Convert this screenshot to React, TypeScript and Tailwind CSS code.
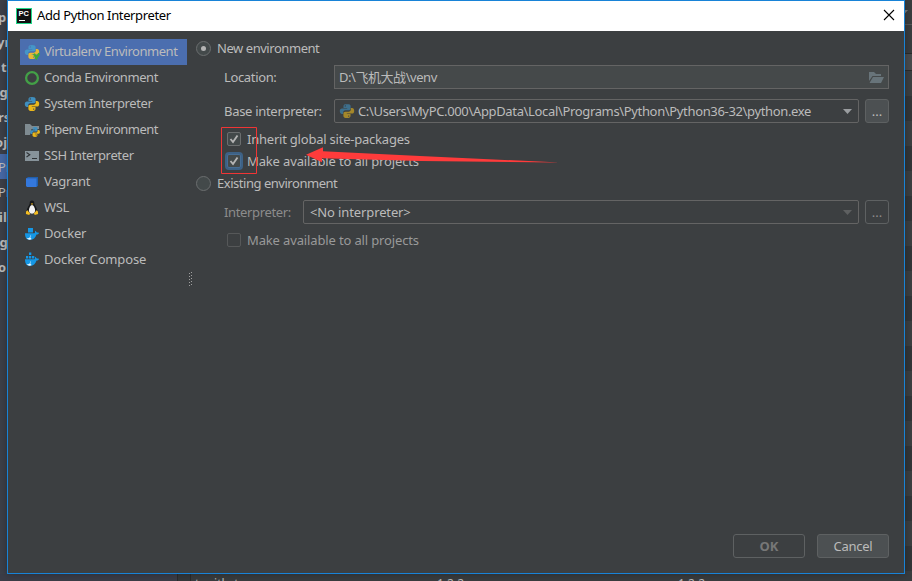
import type { ReactNode } from 'react';

const snake =
  'M8 .9C5.500.9 4.500 1.700 4.500 3v1.900h3.700v.5H3C1.600 5.400.8 6.500.8 8.100S1.600 11 3 11h1.200V9.400c0-1.300 1-2.200 2.200-2.200h3.400c1 0 1.800-.8 1.800-1.800V3c0-1.300-1-2.100-3.600-2.100zM6.300 2.200a.7.7 0 1 1 0 1.400.7.7 0 0 1 0-1.400z';

function PythonIcon({ className = '' }: { className?: string }) {
  return (
    <svg width="16" height="16" viewBox="0 0 16 16" className={`shrink-0 ${className}`}>
      <path fill="#3f8fbf" d={snake} />
      <path fill="#eab71b" d={snake} transform="rotate(180 8 8)" />
    </svg>
  );
}

function VirtualenvIcon() {
  return (
    <svg width="16" height="16" viewBox="0 0 16 16" className="shrink-0">
      <path fill="#4596c8" d={snake} />
      <path fill="#e6b935" d={snake} transform="rotate(180 8 8)" />
      <path d="M10 9.800l2.400 4.400 2.800-4.800" fill="none" stroke="#3dac35" strokeWidth="2.200" />
    </svg>
  );
}

function CondaIcon() {
  return (
    <svg width="16" height="16" viewBox="0 0 16 16" className="shrink-0">
      <circle cx="8" cy="8" r="5.900" fill="none" stroke="#43a047" strokeWidth="2.300" />
    </svg>
  );
}

function PipenvIcon() {
  return (
    <svg width="16" height="16" viewBox="0 0 16 16" className="shrink-0">
      <path fill="#7f8b91" d="M1 2h5l2 2h7v3H7.500L6 13H1z" />
      <svg x="5.500" y="4.500" width="11" height="11" viewBox="0 0 16 16">
        <PythonIcon />
      </svg>
    </svg>
  );
}

function SshIcon() {
  return (
    <svg width="16" height="16" viewBox="0 0 16 16" className="shrink-0">
      <path fill="#87939a" d="M1 3h14v10H1z" />
      <path d="M2.500 4.500L5.800 6.700 2.500 9M8 10.500h5" fill="none" stroke="#2f3336" strokeWidth="1.100" />
    </svg>
  );
}

function VagrantIcon() {
  return (
    <svg width="16" height="16" viewBox="0 0 16 16" className="shrink-0">
      <path fill="#1f5fae" d="M4 3h10v9l-2 1V4.500H2z" />
      <path fill="#3478dc" d="M2 4.300h10.500V13H3l-1-1z" />
    </svg>
  );
}

function LinuxIcon() {
  return (
    <svg width="16" height="16" viewBox="0 0 16 16" className="shrink-0">
      <path fill="#16181a" d="M8 .6c1.700 0 2.300 1.100 2.300 2.700 0 2 2.900 4 3 8.200L11 14H5l-2.300-2.500c.1-4 3-6.200 3-8.200C5.700 1.700 6.300.6 8 .6z" />
      <path fill="#f2f2f2" d="M8 4.900c1.500 0 3.100 3 3.100 5.500 0 2-1.200 3.300-3.100 3.300s-3.100-1.300-3.100-3.300C4.900 8 6.500 4.900 8 4.900z" />
      <path fill="#f5bd20" d="M6.700 3.600h2.600L8 5zM3.400 10.200l2.700 3.400-.9 1.300-3.300-.9.200-2.400zM12.600 10.200l-2.700 3.400.9 1.300 3.300-.9-.2-2.400z" />
    </svg>
  );
}

function DockerIcon({ compose = false }: { compose?: boolean }) {
  return (
    <svg width="16" height="16" viewBox="0 0 16 16" className="shrink-0">
      {compose ? (
        <path fill="#1597e5" d="M5 .5h2.300V3H5zM2 4h2.300v2.500H2zM5 4h2.300v2.500H5zM8 4h2.300v2.500H8z" />
      ) : (
        <path fill="#1597e5" d="M4 2h5v4.500H4z" />
      )}
      <path fill="#1597e5" d="M1 7.200h9.500c.7-.4.600-1.700.4-2.400.9.200 1.600 1 1.800 1.800.9-.2 1.800 0 2.300.3-.4 1.100-1.400 1.600-2.500 1.700-1 3.500-3.200 5.400-6.400 5.400C2.600 14 1 11.500 1 7.200z" />
      <path fill="#e8f5fd" d="M2.500 12.300c1.700.2 2.700-.3 3.700-1.400.3 1 .8 1.600 1.500 2.100-1.500 1-3.500 1-5.200-.7z" />
      <circle cx="6.500" cy="10" r=".6" fill="#e8f5fd" />
    </svg>
  );
}

const environments: { label: string; icon: ReactNode; className: string }[] = [
  { label: 'Virtualenv Environment', icon: <VirtualenvIcon />, className: 'bg-[#4b6eaf] tracking-[-0.47px]' },
  { label: 'Conda Environment', icon: <CondaIcon />, className: 'tracking-[-0.43px]' },
  { label: 'System Interpreter', icon: <PythonIcon />, className: 'tracking-[-0.37px]' },
  { label: 'Pipenv Environment', icon: <PipenvIcon />, className: 'tracking-[-0.5px]' },
  { label: 'SSH Interpreter', icon: <SshIcon />, className: 'tracking-[-0.35px]' },
  { label: 'Vagrant', icon: <VagrantIcon />, className: 'tracking-[-0.25px]' },
  { label: 'WSL', icon: <LinuxIcon />, className: 'tracking-[-0.35px]' },
  { label: 'Docker', icon: <DockerIcon />, className: 'tracking-[-0.15px]' },
  { label: 'Docker Compose', icon: <DockerIcon compose />, className: 'tracking-[-0.15px]' },
];

function Radio({ checked = false }: { checked?: boolean }) {
  return (
    <span className="flex size-[15px] shrink-0 items-center justify-center rounded-full border border-[#6b6e6f] bg-[#43494a]">
      {checked && <span className="size-[5px] rounded-full bg-[#b4b4b4]" />}
    </span>
  );
}

function Checkbox({ checked = false, focused = false, disabled = false }: { checked?: boolean; focused?: boolean; disabled?: boolean }) {
  const border = focused
    ? 'border-[#466d94] bg-[#43494a] ring-2 ring-[#3d6185]'
    : disabled
      ? 'border-[#565859]'
      : 'border-[#6b6e6f] bg-[#43494a]';
  return (
    <span className={`flex size-3.5 shrink-0 items-center justify-center rounded-[2px] border ${border}`}>
      {checked && (
        <svg width="12" height="12" viewBox="0 0 12 12" className="shrink-0">
          <path d="M2.500 6l2.500 3L9.500 2.500" fill="none" stroke="#b4b4b4" strokeWidth="1.900" />
        </svg>
      )}
    </span>
  );
}

function ComboArrow({ className }: { className: string }) {
  return (
    <svg width="9" height="5" viewBox="0 0 9 5" className={`shrink-0 ${className}`}>
      <path d="M0 0h9L4.500 5z" fill="currentColor" />
    </svg>
  );
}

const projectRows = [
  { text: 'p', className: '-ml-[2px] font-bold' },
  { text: 'yn', className: '-ml-[3px] font-bold' },
  { text: 't', className: 'ml-px font-bold' },
  { text: 'ug', className: '-ml-[9px] font-bold' },
  { text: 'rs', className: '-ml-[2px] font-bold' },
  { text: 'oj', className: '-ml-[5px] font-bold' },
  { text: 'Pr', className: '-ml-[2px]' },
  { text: 'Pr', className: '-ml-[2px]' },
  { text: 'ile', className: '-ml-px font-bold' },
  { text: 'ng', className: '-ml-[9px] font-bold' },
  { text: 'o', className: '-ml-[2px] font-bold' },
];

function Backdrop() {
  return (
    <>
      <div className="w-[7px] bg-[#3c3f48] pt-1">
        {projectRows.map((row, i) => (
          <div key={i} className={`flex h-[25px] items-center ${i === 6 ? 'bg-[#4769a6]' : ''}`}>
            <span className={row.className}>{row.text}</span>
          </div>
        ))}
      </div>
      <div className="ml-auto w-[7px] bg-[#3a3d3f]">
        <div className="flex h-[25px] items-center border-b border-[#555759]">
          <ComboArrow className="-ml-1.5 text-[#7d8082]" />
        </div>
        <div className="h-7" />
        <div className="h-[18px] border-y border-[#2b2b2b] bg-[#4a4c4e]" />
        {Array.from({ length: 20 }, (_, i) => (
          <div key={i} className={`h-[25px] ${i % 2 === 0 ? 'bg-[#3c3f41]' : 'bg-[#333638]'}`} />
        ))}
      </div>
    </>
  );
}

export default function App() {
  return (
    <div className="relative h-[581px] w-[912px] overflow-hidden bg-[#35383a] font-['Noto_Sans','Noto_Sans_CJK_SC',sans-serif] text-[13px] leading-4 text-[#bbbbbb]">
      <div className="flex h-full">
        <Backdrop />
      </div>
      <div className="absolute inset-x-0 top-[574px] flex h-[7px]">
        <div className="w-[177px] bg-[#3b3d47]" />
        <div className="w-3.5 border-x border-[#2b2b2b] bg-[#35383a]" />
        <div className="flex grow bg-[#393c3e] pt-0.5 text-[12px]">
          <span className="w-[246px] pl-1">t_with_t</span>
          <span className="w-[241px]">1.2.2</span>
          <span>1.2.2</span>
        </div>
      </div>

      <div className="absolute top-0 left-[7px] flex h-[574px] w-[898px] flex-col border border-[#1883d7] bg-[#3c3f41] shadow-[0_0_8px_rgba(0,0,0,0.3)]">
        <div className="flex h-[30px] shrink-0 items-center bg-white pl-2 text-black">
          <svg width="16" height="16" viewBox="0 0 16 16">
            <path fill="#21d789" d="M0 0h16v16H0z" />
            <path fill="#111" d="M1 1h14v14H1z" />
            <text x="2.500" y="8.200" fill="#fff" fontSize="7.500" fontWeight="700" fontFamily="Liberation Sans">PC</text>
            <path fill="#fff" d="M3 12h6v1H3z" />
          </svg>
          <span className="mb-0.5 ml-[5px] tracking-[-0.37px]">Add Python Interpreter</span>
          <svg width="12" height="12" viewBox="0 0 12 12" className="mr-[9px] mb-0.5 ml-auto">
            <path d="M1 1l10 10M11 1L1 11" stroke="#000" strokeWidth="1.100" />
          </svg>
        </div>

        <div className="flex grow">
          <div className="w-[179px] shrink-0 pt-2 pl-3">
            {environments.map((env) => (
              <div key={env.label} className={`flex h-[26px] w-[167px] items-center gap-1 pb-px pl-1 whitespace-nowrap ${env.className}`}>
                {env.icon}
                <span className="pb-px">{env.label}</span>
              </div>
            ))}
          </div>
          <svg width="5" height="14" viewBox="0 0 5 14" className="mt-[241px] ml-[1px] shrink-0">
            <path d="M1.500 1v13M3.500 0v14" stroke="#a0a0a0" strokeDasharray="1 2" />
          </svg>

          <div className="ml-[3px] flex w-[693px] flex-col pt-2.5">
            <div className="flex h-[15px] items-center gap-1.5">
              <Radio checked />
              <span className="pb-0.5 tracking-[-0.45px]">New environment</span>
            </div>
            <div className="mt-[9px] flex h-6 items-center pl-7">
              <span className="w-[110px] tracking-[-0.35px]">Location:</span>
              <div className="flex h-6 w-[555px] items-center border border-[#646464] bg-[#45494a] pr-1 pl-1">
                <span className="tracking-[-0.45px]">D:\飞机大战\venv</span>
                <svg width="16" height="13" viewBox="0 0 16 13" className="ml-auto">
                  <path fill="#68747a" d="M1 1h5l2 2h5v2H4.500L1 10zM5 6h11l-3 6H1.500z" />
                </svg>
              </div>
            </div>
            <div className="mt-2.5 flex h-6 items-center pl-7">
              <span className="w-[110px] tracking-[-0.3px]">Base interpreter:</span>
              <div className="flex h-6 w-[525px] items-center rounded-[2px] border border-[#646464] pr-1.5 pl-1">
                <PythonIcon className="opacity-60" />
                <span className="ml-[3px] tracking-[-0.345px] whitespace-nowrap">
                  C:\Users\MyPC.000\AppData\Local\Programs\Python\Python36-32\python.exe
                </span>
                <ComboArrow className="ml-auto text-[#9a9da0]" />
              </div>
              <button className="ml-1.5 h-6 w-6 rounded-[3px] border border-[#5e6162] bg-[#4c5052]">...</button>
            </div>
            <div className="mt-[9px] flex h-3.5 items-center gap-1.5 pl-[31px]">
              <Checkbox checked />
              <span className="tracking-[-0.22px]">Inherit global site-packages</span>
            </div>
            <div className="mt-2 flex h-3.5 items-center gap-1.5 pl-[31px]">
              <Checkbox checked focused />
              <span className="tracking-[-0.14px]">Make available to all projects</span>
            </div>
            <div className="mt-2 flex h-[15px] items-center gap-1.5">
              <Radio />
              <span className="pb-0.5 tracking-[-0.47px]">Existing environment</span>
            </div>
            <div className="mt-[9px] flex h-6 items-center pl-7">
              <span className="w-[79px] tracking-[-0.35px] text-[#8c8c8c]">Interpreter:</span>
              <div className="flex h-6 w-[556px] items-center rounded-[2px] border border-[#646464] pr-1.5 pl-1.5">
                <span className="tracking-[-0.12px]">&lt;No interpreter&gt;</span>
                <ComboArrow className="ml-auto text-[#5e6061]" />
              </div>
              <button className="ml-1.5 h-6 w-6 rounded-[3px] border border-[#5e6162] text-[#8c8c8c]">...</button>
            </div>
            <div className="mt-[9px] flex h-3.5 items-center gap-1.5 pl-[31px] text-[#999999]">
              <Checkbox disabled />
              <span className="tracking-[-0.14px]">Make available to all projects</span>
            </div>
            <div className="mt-auto mb-[15px] flex justify-end gap-3">
              <button className="h-6 w-[72px] rounded-[3px] border border-[#5e6162] font-bold text-[#777777]">OK</button>
              <button className="h-6 w-[72px] rounded-[3px] border border-[#5e6162] bg-[#4c5052] tracking-[-0.25px]">Cancel</button>
            </div>
          </div>
        </div>
      </div>

      {/* red callout over the two checkboxes */}
      <svg width="342" height="50" viewBox="220 126 342 50" className="absolute top-[126px] left-[220px]">
        <path d="M221.500 127.500h35v46h-35z" fill="none" stroke="#f03535" />
        <path d="M306 154.800l17-7.500v4l97 4.700 140 6.500-140-1.500-98-2.700v4z" fill="#ff3b3b" />
      </svg>
    </div>
  );
}
